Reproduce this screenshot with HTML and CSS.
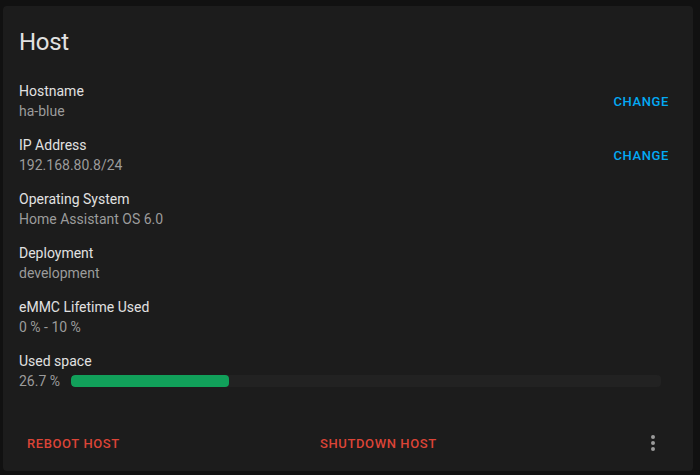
FILE: index.html
```html
<!DOCTYPE html>
<html lang="en">
<head>
<meta charset="utf-8">
<title>Host</title>
<link rel="stylesheet" href="styles.css">
</head>
<body>
<div class="card">
  <h1 class="card-header">Host</h1>
  <div class="card-content">
    <div class="row">
      <div class="info">
        <div class="label">Hostname</div>
        <div class="value">ha-blue</div>
      </div>
      <button class="btn btn-primary">Change</button>
    </div>
    <div class="row">
      <div class="info">
        <div class="label">IP Address</div>
        <div class="value">192.168.80.8/24</div>
      </div>
      <button class="btn btn-primary">Change</button>
    </div>
    <div class="row">
      <div class="info">
        <div class="label">Operating System</div>
        <div class="value">Home Assistant OS 6.0</div>
      </div>
    </div>
    <div class="row">
      <div class="info">
        <div class="label">Deployment</div>
        <div class="value">development</div>
      </div>
    </div>
    <div class="row">
      <div class="info">
        <div class="label">eMMC Lifetime Used</div>
        <div class="value">0 % - 10 %</div>
      </div>
    </div>
    <div class="row">
      <div class="info info-wide">
        <div class="label">Used space</div>
        <div class="value usage">
          <span>26.7 %</span>
          <div class="bar"><div class="bar-fill" style="width: 26.7%"></div></div>
        </div>
      </div>
    </div>
  </div>
  <div class="card-actions">
    <button class="btn btn-warning">Reboot host</button>
    <button class="btn btn-warning">Shutdown host</button>
    <button class="icon-btn" aria-label="menu">
      <svg viewBox="0 0 24 24" width="24" height="24"><path d="M12,16A2,2 0 0,1 14,18A2,2 0 0,1 12,20A2,2 0 0,1 10,18A2,2 0 0,1 12,16M12,10A2,2 0 0,1 14,12A2,2 0 0,1 12,14A2,2 0 0,1 10,12A2,2 0 0,1 12,10M12,4A2,2 0 0,1 14,6A2,2 0 0,1 12,8A2,2 0 0,1 10,6A2,2 0 0,1 12,4Z"/></svg>
    </button>
  </div>
</div>
</body>
</html>
```

FILE: styles.css
```css
html, body {
  margin: 0;
  background: #111111;
}
body {
  padding: 6px 7px 4px 3px;
  font-family: Roboto, "Liberation Sans", sans-serif;
  color: #e1e1e1;
}
.card {
  width: 690px;
  height: 465px;
  box-sizing: border-box;
  background: #1c1c1c;
  border-radius: 4px;
  display: flex;
  flex-direction: column;
}
.card-header {
  margin: 0;
  padding: 12px 16px 0;
  font-size: 24px;
  font-weight: 400;
  line-height: 48px;
  letter-spacing: -0.012em;
  color: #e1e1e1;
}
.card-content {
  padding: 15px 16px 0;
  display: flex;
  flex-direction: column;
  gap: 14px;
}
.row {
  height: 40px;
  display: flex;
  align-items: center;
  justify-content: space-between;
}
.info {
  display: flex;
  flex-direction: column;
}
.info-wide {
  flex: 1;
}
.label {
  font-size: 14px;
  line-height: 20px;
  color: #e1e1e1;
}
.value {
  font-size: 14px;
  line-height: 20px;
  color: #9b9b9b;
}
.usage {
  display: flex;
  align-items: center;
}
.bar {
  flex: 1;
  height: 12px;
  margin: 0 16px 0 11px;
  background: #222222;
  border-radius: 4px;
  overflow: hidden;
}
.bar-fill {
  height: 100%;
  background: #11a05a;
  border-radius: 4px;
}
.btn {
  background: none;
  border: none;
  height: 36px;
  padding: 0 8px;
  font-family: Roboto, "Liberation Sans", sans-serif;
  font-size: 13px;
  font-weight: 500;
  letter-spacing: 0.6px;
  text-transform: uppercase;
  cursor: pointer;
}
.btn-primary {
  color: #03a9f4;
}
.btn-warning {
  color: #db4437;
}
.card-actions {
  margin-top: 28px;
  padding: 0 16px 4px;
  display: flex;
  align-items: center;
  justify-content: space-between;
}
.icon-btn {
  width: 48px;
  height: 48px;
  padding: 12px;
  background: none;
  border: none;
  display: flex;
  align-items: center;
  justify-content: center;
}
.icon-btn svg {
  fill: #9b9b9b;
}
```
